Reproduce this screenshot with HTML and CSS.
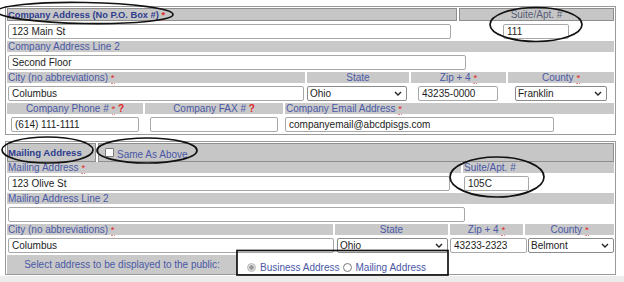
FILE: index.html
```html
<!DOCTYPE html>
<html lang="en">
<head>
    <meta charset="UTF-8">
    <meta name="viewport" content="width=device-width, initial-scale=1.0">
    <title>Company Address</title>
    <link rel="stylesheet" href="styles.css">
</head>
<body>
    <div class="page">
        <!-- company address block -->
        <div class="panel company">
            <div class="row head">
                <div class="hd hd-street">Company Address (No P.O. Box #) <span class="req">*</span></div>
                <div class="hd hd-suite">Suite/Apt. #</div>
            </div>
            <div class="row inputs">
                <input class="in-street" type="text" value="123 Main St">
                <input class="in-suite" type="text" value="111">
            </div>
            <div class="row labels">
                <div class="lb lb-full">Company Address Line 2</div>
            </div>
            <div class="row inputs">
                <input class="in-line2" type="text" value="Second Floor">
            </div>
            <div class="row labels">
                <div class="lb lb-city">City (no abbreviations) <span class="req">*</span></div>
                <div class="lb lb-state center">State</div>
                <div class="lb lb-zip center">Zip + 4 <span class="req">*</span></div>
                <div class="lb lb-county center">County <span class="req">*</span></div>
            </div>
            <div class="row inputs">
                <input class="in-city" type="text" value="Columbus">
                <div class="select sel-state"><span>Ohio</span><svg width="8" height="5" viewBox="0 0 8 5"><path d="M1 1 L4 4 L7 1" fill="none" stroke="#222" stroke-width="1.4"/></svg></div>
                <input class="in-zip" type="text" value="43235-0000">
                <div class="select sel-county"><span>Franklin</span><svg width="8" height="5" viewBox="0 0 8 5"><path d="M1 1 L4 4 L7 1" fill="none" stroke="#222" stroke-width="1.4"/></svg></div>
            </div>
            <div class="row labels">
                <div class="lb lb-phone center">Company Phone # <span class="req">*</span> <span class="help">?</span></div>
                <div class="lb lb-fax center">Company FAX # <span class="help">?</span></div>
                <div class="lb lb-email">Company Email Address <span class="req">*</span></div>
            </div>
            <div class="row inputs">
                <input class="in-phone" type="text" value="(614) 111-1111">
                <input class="in-fax" type="text" value="">
                <input class="in-email" type="text" value="companyemail@abcdpisgs.com">
            </div>
        </div>

        <!-- mailing address block -->
        <div class="panel mailing">
            <div class="row head tall">
                <div class="hd hd-mail">Mailing Address</div>
                <div class="hd hd-same">
                    <span class="checkbox"></span>
                    <span class="same-text">Same As Above</span>
                </div>
            </div>
            <div class="row labels">
                <div class="lb lb-mstreet">Mailing Address <span class="req">*</span></div>
                <div class="lb lb-msuite">Suite/Apt. #</div>
            </div>
            <div class="row inputs">
                <input class="in-street" type="text" value="123 Olive St">
                <input class="in-suite" type="text" value="105C">
            </div>
            <div class="row labels">
                <div class="lb lb-full">Mailing Address Line 2</div>
            </div>
            <div class="row inputs">
                <input class="in-line2" type="text" value="">
            </div>
            <div class="row labels">
                <div class="lb lb-city">City (no abbreviations) <span class="req">*</span></div>
                <div class="lb lb-state center">State</div>
                <div class="lb lb-zip center">Zip + 4 <span class="req">*</span></div>
                <div class="lb lb-county center">County <span class="req">*</span></div>
            </div>
            <div class="row inputs">
                <input class="in-city" type="text" value="Columbus">
                <div class="select sel-state"><span>Ohio</span><svg width="8" height="5" viewBox="0 0 8 5"><path d="M1 1 L4 4 L7 1" fill="none" stroke="#222" stroke-width="1.4"/></svg></div>
                <input class="in-zip" type="text" value="43233-2323">
                <div class="select sel-county"><span>Belmont</span><svg width="8" height="5" viewBox="0 0 8 5"><path d="M1 1 L4 4 L7 1" fill="none" stroke="#222" stroke-width="1.4"/></svg></div>
            </div>
            <div class="row public">
                <div class="public-label">Select address to be displayed to the public:</div>
                <div class="public-options">
                    <span class="radio checked"></span><span class="radio-text">Business Address</span>
                    <span class="radio"></span><span class="radio-text">Mailing Address</span>
                </div>
            </div>
        </div>
        <div class="strip"></div>

        <!-- hand drawn markup over the screenshot -->
        <svg class="marks" width="624" height="282" viewBox="0 0 624 282">
            <g fill="none" stroke="#111" stroke-width="1.7">
                <ellipse cx="85" cy="13" rx="88" ry="10.5" transform="rotate(1 85 13)"/>
                <ellipse cx="536" cy="24.5" rx="46" ry="17"/>
                <ellipse cx="47.5" cy="150" rx="45.5" ry="13"/>
                <ellipse cx="147" cy="150.5" rx="50" ry="12.5"/>
                <ellipse cx="497" cy="177" rx="47" ry="20"/>
                <rect x="237" y="250.5" width="211" height="24.5"/>
            </g>
        </svg>
    </div>
</body>
</html>
```

FILE: styles.css
```css
* {
    margin: 0;
    padding: 0;
    box-sizing: border-box;
}

body {
    background: #fff;
    font-family: 'Liberation Sans', Arial, sans-serif;
    font-size: 10px;
    color: #222;
}

.page {
    position: relative;
    width: 624px;
    height: 282px;
    overflow: hidden;
    padding-top: 6px;
}

.panel {
    width: 611px;
    margin-left: 5px;
    border: 1px solid #9a9a9a;
    padding: 1px 1px 0 1px;
}

.mailing {
    margin-top: 6px;
}

.row {
    display: flex;
}

/* header cells */
.head {
    height: 13px;
    gap: 2px;
}

.head.tall {
    height: 19px;
}

.hd {
    background: #c6c6c6;
    border: 1px solid #8e8e8e;
    line-height: 11px;
    white-space: nowrap;
}

.hd-street {
    width: 450px;
    font-weight: bold;
    font-size: 9.3px;
    color: #2e3d8e;
}

.hd-suite {
    width: 155px;
    text-align: center;
    color: #585d75;
}

.hd-mail {
    width: 89px;
    font-weight: bold;
    font-size: 9.6px;
    color: #2e3d8e;
    display: flex;
    align-items: center;
}

.hd-same {
    width: 516px;
    display: flex;
    align-items: center;
    padding-left: 6px;
}

.checkbox {
    width: 9px;
    height: 9px;
    background: #fff;
    border: 1px solid #7a7a7a;
    border-radius: 1px;
}

.same-text {
    margin-left: 3px;
    margin-top: 3px;
    color: #4a58a6;
}

/* label bars */
.labels {
    height: 11px;
    gap: 2px;
}

.lb {
    background: #c9c9c9;
    color: #4a58a6;
    line-height: 11px;
    padding-left: 1px;
    white-space: nowrap;
}

.lb.center {
    text-align: center;
    padding-left: 0;
}

.req {
    color: #e02626;
    font-size: 9.5px;
    border-bottom: 1px dotted #e88;
}

.help {
    color: #e02626;
    font-weight: bold;
}

.lb-full { width: 607px; }

.lb-city { width: 298px; }
.lb-state { width: 102px; }
.lb-zip { width: 95px; }
.lb-county { width: 106px; }

.lb-phone { width: 136px; }
.lb-fax { width: 138px; }
.lb-email { width: 329px; }

.lb-mstreet { width: 454px; }
.lb-msuite { width: 151px; }

.mailing .lb-city { width: 326px; }
.mailing .lb-state { width: 113px; }
.mailing .lb-zip { width: 73px; }
.mailing .lb-county { width: 89px; }

/* inputs */
.inputs {
    height: 20px;
    padding-top: 3px;
    align-items: flex-start;
}

.inputs input,
.select {
    height: 15px;
    border: 1px solid #a8a8a8;
    border-radius: 2px;
    background: #fff;
    font-family: 'Liberation Sans', Arial, sans-serif;
    font-size: 10px;
    color: #222;
    padding: 0 3px;
    outline: none;
}

.select {
    display: flex;
    align-items: center;
    justify-content: space-between;
    padding: 0 4px 0 2px;
    border-color: #8a8a8a;
}

.in-street { margin-left: 1px; width: 443px; }
.in-suite { margin-left: 52px; width: 66px; }
.in-line2 { margin-left: 1px; width: 458px; }
.in-city { margin-left: 1px; width: 296px; }
.sel-state { margin-left: 3px; width: 100px; }
.in-zip { margin-left: 11px; width: 80px; }
.sel-county { margin-left: 17px; width: 92px; }
.in-phone { margin-left: 4px; width: 128px; }
.in-fax { margin-left: 11px; width: 128px; }
.in-email { margin-left: 7px; width: 269px; }

.mailing .in-street { width: 442px; }
.mailing .in-suite { margin-left: 14px; width: 65px; }
.mailing .in-line2 { width: 457px; }
.mailing .in-city { width: 326px; }
.mailing .sel-state { margin-left: 3px; width: 111px; }
.mailing .in-zip { margin-left: 2px; width: 77px; }
.mailing .sel-county { margin-left: 1px; width: 86px; }

/* public address choice */
.public {
    height: 19px;
}

.public-label {
    width: 230px;
    background: #c9c9c9;
    color: #4a58a6;
    text-align: center;
    line-height: 20px;
}

.public-options {
    flex: 1;
    display: flex;
    align-items: center;
    padding: 5px 0 0 10px;
    color: #4a58a6;
}

.radio {
    width: 9px;
    height: 9px;
    border: 1px solid #7a7a7a;
    border-radius: 50%;
    background: #fff;
    margin-right: 4px;
}

.radio.checked {
    border-color: #b4b4b4;
    background: radial-gradient(circle, #9a9a9a 0 2px, #e4e4e4 2.5px);
}

.radio-text {
    margin-right: 3px;
}

.strip {
    height: 6px;
    margin-top: 1px;
    background: #ececec;
}

.marks {
    position: absolute;
    top: 0;
    left: 0;
    pointer-events: none;
}
```
